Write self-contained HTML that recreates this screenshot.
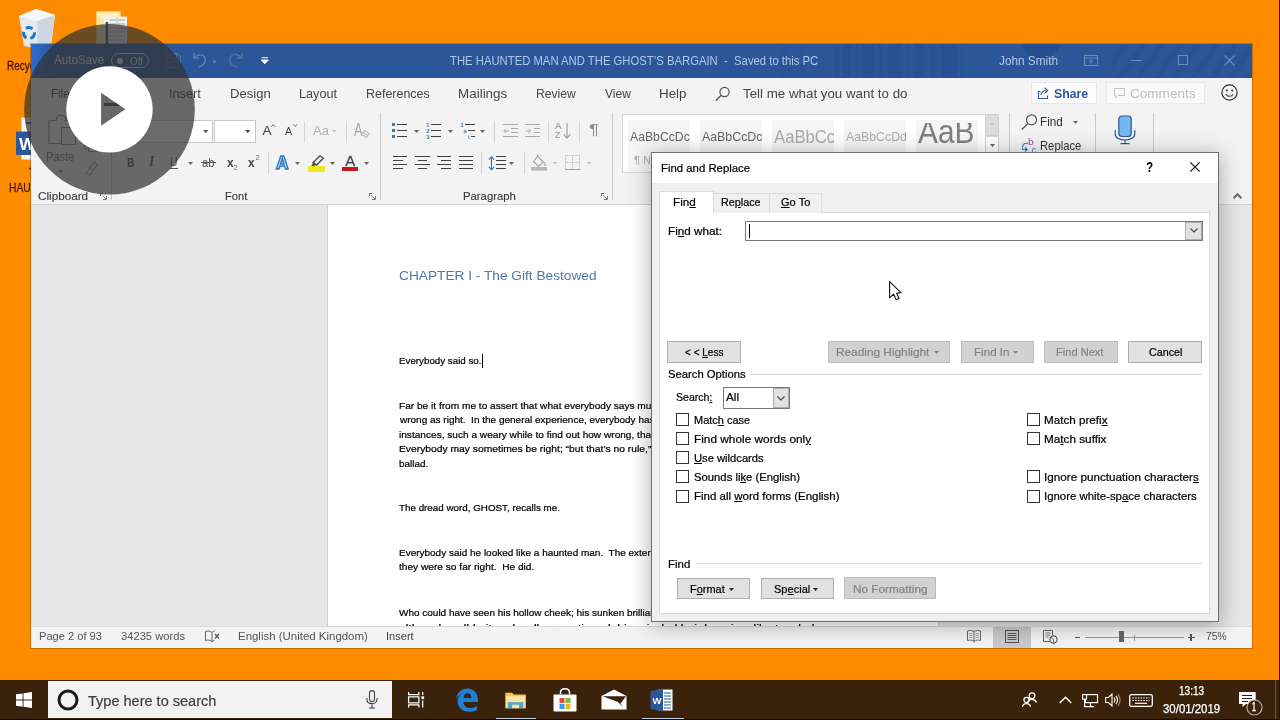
<!DOCTYPE html>
<html lang="en"><head><meta charset="utf-8"><title>Find and Replace - Word</title>
<style>
html,body{margin:0;padding:0}
body{width:1280px;height:720px;overflow:hidden;background:#ff8c00;font-family:"Liberation Sans",sans-serif}
#root{position:relative;width:1280px;height:720px;overflow:hidden;will-change:transform}
.a{position:absolute}
.t{position:absolute;white-space:pre;transform-origin:0 0;line-height:normal;font-family:"Liberation Sans",sans-serif}
.dlg{-webkit-text-stroke:.22px currentColor}
.t u{text-decoration:underline;text-underline-offset:1px}
svg{position:absolute;overflow:visible}
.btn{position:absolute;box-sizing:border-box;background:#e1e1e1;border:1px solid #adadad}
.btn.dis{background:#d2d2d2;border-color:#bcbcbc}
.cb{position:absolute;box-sizing:border-box;width:13px;height:13px;background:#fff;border:1px solid #333}
.sep{position:absolute;width:1px;background:#d0d0d0}
.clip{position:absolute;overflow:hidden}
</style></head><body><div id="root">
<svg style="left:16px;top:8px" width="42" height="42" viewBox="0 0 42 42">
<polygon points="3,8 20,1 39,7 35,38 22,41 8,38" fill="#e4e9ee"/>
<polygon points="3,8 20,1 39,7 21,13" fill="#f4f7fa"/>
<polygon points="21,13 39,7 35,38 22,41" fill="#cfd6dd"/>
<circle cx="13" cy="25" r="5.5" fill="none" stroke="#1979c9" stroke-width="3" stroke-dasharray="7 4"/>
</svg>
<span class="t " style="left:6.70px;top:59.00px;font-size:12.5px;color:#4a1200;transform:scaleX(0.7971);-webkit-text-stroke:.3px #4a1200;">Recycle Bin</span><svg style="left:96px;top:11px" width="32" height="34" viewBox="0 0 32 34">
<rect x="0.3" y="0.3" width="24.3" height="33" fill="#ffe49a"/>
<rect x="2" y="2" width="21" height="5" fill="#fff0c0"/>
<rect x="7.7" y="5.6" width="23.3" height="28" fill="#f3f1ea"/>
<rect x="9.6" y="11" width="2.6" height="22.5" fill="#4b4b4b"/>
<path d="M13.5 9H29M13.5 13H29M13.5 17H29M13.5 21H29M13.5 25H29M13.5 29H29" stroke="#b9bcc4" stroke-width="1.3"/>
<rect x="20" y="6" width="2" height="27" fill="#d9d9d9"/>
</svg>
<svg style="left:14px;top:117px" width="40" height="44" viewBox="0 0 40 44">
<rect x="7.5" y="0.5" width="26" height="42" fill="#fafafa"/>
<rect x="12" y="5" width="16" height="2" fill="#2b579a"/>
<rect x="2" y="14.5" width="23" height="23.5" fill="#2b579a"/>
</svg>
<span class="t " style="left:18.50px;top:134.50px;font-size:17px;color:#fff;font-weight:700;transform:scaleX(1.0294);">W</span><span class="t " style="left:28.50px;top:166.00px;font-size:12.5px;color:#4a1200;transform:scaleX(0.8718);-webkit-text-stroke:.3px #4a1200;">THE</span><span class="t " style="left:8.88px;top:181.40px;font-size:12.5px;color:#4a1200;transform:scaleX(0.8200);-webkit-text-stroke:.3px #4a1200;">HAUNTED</span><div class="a" style="left:31px;top:44px;width:1221px;height:604px;background:#f3f3f3;box-shadow:0 0 0 1px rgba(90,50,10,.35)"></div>
<div class="a" style="left:31px;top:44px;width:1221px;height:34px;background:#2b579a;overflow:hidden"><div class="a" style="left:804px;top:0;width:4px;height:34px;background:rgba(20,50,110,0.1)"></div><div class="a" style="left:812px;top:0;width:8px;height:34px;background:rgba(20,50,110,0.14)"></div><div class="a" style="left:825px;top:0;width:3px;height:34px;background:rgba(20,50,110,0.1)"></div><div class="a" style="left:831px;top:0;width:12px;height:34px;background:rgba(20,50,110,0.16)"></div><div class="a" style="left:847px;top:0;width:5px;height:34px;background:rgba(20,50,110,0.1)"></div><div class="a" style="left:857px;top:0;width:14px;height:34px;background:rgba(20,50,110,0.16)"></div><div class="a" style="left:875px;top:0;width:4px;height:34px;background:rgba(20,50,110,0.1)"></div><div class="a" style="left:883px;top:0;width:10px;height:34px;background:rgba(20,50,110,0.15)"></div><div class="a" style="left:899px;top:0;width:6px;height:34px;background:rgba(20,50,110,0.1)"></div><div class="a" style="left:910px;top:0;width:16px;height:34px;background:rgba(20,50,110,0.14)"></div><div class="a" style="left:929px;top:0;width:5px;height:34px;background:rgba(20,50,110,0.09)"></div><div class="a" style="left:749px;top:0;width:10px;height:34px;background:rgba(20,50,110,0.06)"></div><div class="a" style="left:769px;top:0;width:6px;height:34px;background:rgba(20,50,110,0.06)"></div><div class="a" style="left:1080px;top:0;width:141px;height:34px;background:repeating-linear-gradient(125deg,rgba(20,50,110,0) 0 9px,rgba(20,50,110,.13) 9px 15px)"></div><div class="a" style="left:0;top:0;width:22px;height:34px;background:linear-gradient(to right,#2a6cd2,#2b62b8 60%,#2b579a)"></div><div class="a" style="left:991px;top:-22px;width:38px;height:38px;border-radius:50%;background:rgba(20,50,110,.22)"></div></div>
<span class="t " style="left:53.75px;top:52.25px;font-size:13px;color:#dfe8f8;transform:scaleX(0.8906);">AutoSave</span><div class="a" style="left:111px;top:53px;width:38px;height:15px;border:1px solid #dfe8f8;border-radius:8px;box-sizing:border-box"></div>
<div class="a" style="left:116.5px;top:57.5px;width:6px;height:6px;border-radius:50%;background:#dfe8f8"></div>
<span class="t " style="left:130.00px;top:54.50px;font-size:10.5px;color:#dfe8f8;transform:scaleX(0.9356);">Off</span><svg style="left:166px;top:53px" width="15" height="15" viewBox="0 0 15 15"><path d="M0.5 0.5H11.5L14.5 3.5V14.5H0.5Z M3.5 0.5V5.5H10.5V0.5 M3 14.5V9H12V14.5" fill="none" stroke="#58749f" stroke-width="1"/></svg>
<svg style="left:193px;top:52px" width="26" height="16" viewBox="0 0 26 16"><path d="M1 1V6H6 M1.5 6C4 2.5 9 1.5 11.5 5S11 13 6 15" fill="none" stroke="#6480b2" stroke-width="1.3"/><path d="M19 8.5h5l-2.5 3z" fill="#6480b2"/></svg>
<svg style="left:228px;top:52px" width="16" height="16" viewBox="0 0 16 16"><path d="M14 1V6H9 M13 6C11 2 5 1 2.5 5S3 14 9 15" fill="none" stroke="#58749f" stroke-width="1.3"/></svg>
<svg style="left:261px;top:57px" width="8" height="8" viewBox="0 0 8 8"><path d="M0.5 0.7H7 M0.3 3H7.3L3.8 6.8Z" fill="#fff" stroke="#fff" stroke-width="1"/></svg>
<span class="t " style="left:450.00px;top:54.00px;font-size:12.5px;color:#b4c6e4;transform:scaleX(0.9036);">THE HAUNTED MAN AND THE GHOST’S BARGAIN  -  Saved to this PC</span><span class="t " style="left:999.00px;top:54.00px;font-size:12.5px;color:#b4c6e4;transform:scaleX(0.9428);">John Smith</span><svg style="left:1084px;top:55px" width="14" height="11" viewBox="0 0 14 11"><rect x="0.5" y="0.5" width="13" height="10" fill="none" stroke="#6f8cbb"/><path d="M0.5 3H13.5 M7 9V5 M5 6.8L7 4.8L9 6.8" fill="none" stroke="#6f8cbb"/></svg>
<div class="a" style="left:1131px;top:60px;width:11px;height:1px;background:#6f8cbb"></div>
<div class="a" style="left:1178px;top:55px;width:10px;height:10px;border:1px solid #6f8cbb;box-sizing:border-box"></div>
<svg style="left:1224px;top:55px" width="11" height="11" viewBox="0 0 11 11"><path d="M0.5 0.5L10.5 10.5M10.5 0.5L0.5 10.5" stroke="#6f8cbb" stroke-width="1.1"/></svg>
<span class="t " style="left:51.11px;top:86.00px;font-size:13px;color:#444;transform:scaleX(0.8875);">File</span><span class="t " style="left:104.50px;top:86.00px;font-size:13px;color:#2b579a;transform:scaleX(1.0016);">Home</span><div class="a" style="left:103.5px;top:103px;width:34px;height:2.6px;background:#2b579a"></div>
<span class="t " style="left:169.32px;top:86.00px;font-size:13px;color:#444;transform:scaleX(0.9796);">Insert</span><span class="t " style="left:229.79px;top:86.00px;font-size:13px;color:#444;transform:scaleX(1.0067);">Design</span><span class="t " style="left:299.07px;top:86.00px;font-size:13px;color:#444;transform:scaleX(0.9761);">Layout</span><span class="t " style="left:366.09px;top:86.00px;font-size:13px;color:#444;transform:scaleX(0.9586);">References</span><span class="t " style="left:457.77px;top:86.00px;font-size:13px;color:#444;transform:scaleX(1.0332);">Mailings</span><span class="t " style="left:536.11px;top:86.00px;font-size:13px;color:#444;transform:scaleX(0.9352);">Review</span><span class="t " style="left:605.05px;top:86.00px;font-size:13px;color:#444;transform:scaleX(0.9281);">View</span><span class="t " style="left:659.02px;top:86.00px;font-size:13px;color:#444;transform:scaleX(1.0292);">Help</span><svg style="left:715px;top:86px" width="16" height="16" viewBox="0 0 16 16"><circle cx="9.5" cy="6" r="4.6" fill="none" stroke="#555" stroke-width="1.2"/><path d="M6.2 9.3L0.8 14.7" stroke="#555" stroke-width="1.4"/></svg>
<span class="t " style="left:742.50px;top:86.00px;font-size:13px;color:#444;transform:scaleX(1.0254);">Tell me what you want to do</span><div class="a" style="left:1031px;top:82px;width:66px;height:22px;background:#fdfdfd;border:1px solid #e6e6e6;box-sizing:border-box"></div>
<svg style="left:1038px;top:87px" width="12" height="12" viewBox="0 0 12 12"><path d="M2.5 4.5H0.5V11.5H9.5V8.5 M3 8C3.5 5 6 3.5 8.5 3.5 M6.5 0.8L9.8 3.5L6.5 6.3" fill="none" stroke="#2b579a" stroke-width="1.1"/></svg>
<span class="t " style="left:1054.00px;top:86.00px;font-size:13px;color:#2b579a;font-weight:700;transform:scaleX(0.9471);">Share</span><div class="a" style="left:1106px;top:82px;width:99px;height:22px;background:#fafafa;border:1px solid #e9e9e9;box-sizing:border-box"></div>
<svg style="left:1114px;top:88px" width="12" height="11" viewBox="0 0 12 11"><path d="M0.5 0.5H10.5V7.5H4L1.5 10V7.5H0.5Z" fill="none" stroke="#c4c4c4" stroke-width="1"/></svg>
<span class="t " style="left:1130.00px;top:86.00px;font-size:13px;color:#bdbdbd;transform:scaleX(1.0419);">Comments</span><svg style="left:1221px;top:84px" width="17" height="17" viewBox="0 0 17 17"><circle cx="8.5" cy="8.5" r="7.6" fill="none" stroke="#333" stroke-width="1.2"/><circle cx="5.8" cy="6.5" r="1" fill="#333"/><circle cx="11.2" cy="6.5" r="1" fill="#333"/><path d="M4.8 10.2C6.5 13 10.5 13 12.2 10.2" fill="none" stroke="#333" stroke-width="1.1"/></svg>
<div class="a" style="left:31px;top:204px;width:1221px;height:1px;background:#d2d2d2"></div>
<div class="a" style="left:110.5px;top:113px;width:1px;height:87px;background:#c9c9c9"></div>
<div class="a" style="left:380px;top:113px;width:1px;height:87px;background:#c9c9c9"></div>
<div class="a" style="left:612px;top:113px;width:1px;height:87px;background:#c9c9c9"></div>
<div class="a" style="left:1009px;top:113px;width:1px;height:87px;background:#c9c9c9"></div>
<div class="a" style="left:1095px;top:113px;width:1px;height:87px;background:#c9c9c9"></div>
<div class="a" style="left:1153px;top:113px;width:1px;height:87px;background:#c9c9c9"></div>
<svg style="left:48px;top:115px" width="30" height="31" viewBox="0 0 30 31"><path d="M1 5.5H8.5V2.5C11 -0.5 15 -0.5 17.5 2.5V5.5H25V9 M1 5.5V28.5H13" fill="none" stroke="#8a8a8a" stroke-width="1.1"/><rect x="13.5" y="12.5" width="14" height="17" fill="#f3f3f3" stroke="#8a8a8a" stroke-width="1.1"/></svg>
<span class="t " style="left:45.61px;top:149.70px;font-size:12.5px;color:#777;transform:scaleX(0.8867);">Paste</span><svg style="left:57.5px;top:170px" width="5" height="3.0" viewBox="0 0 5 3.0"><path d="M0 0H5 L2.5 3.0 Z" fill="#888"/></svg>
<svg style="left:84px;top:120px" width="12" height="12" viewBox="0 0 12 12"><path d="M3 0L8 9M9 0L4 9" stroke="#9a9a9a" fill="none"/><circle cx="3" cy="10" r="1.8" fill="none" stroke="#9a9a9a"/><circle cx="9" cy="10" r="1.8" fill="none" stroke="#9a9a9a"/></svg>
<svg style="left:84px;top:139px" width="13" height="13" viewBox="0 0 13 13"><rect x="0.5" y="0.5" width="8" height="9" fill="none" stroke="#9a9a9a"/><rect x="4.5" y="3.5" width="8" height="9" fill="#f3f3f3" stroke="#9a9a9a"/></svg>
<svg style="left:85px;top:161px" width="14" height="15" viewBox="0 0 14 15"><path d="M9 1L12.5 3.5L8 9.5L4.5 7Z M4.5 7L1 12.5L5 14L8 9.5" fill="none" stroke="#a5a5a5" stroke-width="1.1"/></svg>
<span class="t " style="left:37.50px;top:189.70px;font-size:11.5px;color:#3a3a3a;transform:scaleX(1.0179);-webkit-text-stroke:.15px #3a3a3a;">Clipboard</span><svg style="left:100px;top:193px" width="7" height="7" viewBox="0 0 7 7"><path d="M0.5 3V0.5H3 M2.5 2.5L6 6 M6.5 3V6.5H3" fill="none" stroke="#777" stroke-width="1"/></svg>
<div class="a" style="left:117px;top:120px;width:95.5px;height:23px;background:#fff;border:1px solid #c6c6c6;box-sizing:border-box"></div>
<div class="a" style="left:213.5px;top:120px;width:42.5px;height:23px;background:#fff;border:1px solid #c6c6c6;box-sizing:border-box"></div>
<svg style="left:202.55px;top:129.5px" width="5.5" height="3.3" viewBox="0 0 5.5 3.3"><path d="M0 0H5.5 L2.75 3.3 Z" fill="#555"/></svg>
<svg style="left:245.25px;top:129.5px" width="5.5" height="3.3" viewBox="0 0 5.5 3.3"><path d="M0 0H5.5 L2.75 3.3 Z" fill="#555"/></svg>
<span class="t " style="left:262.50px;top:122.70px;font-size:13.5px;color:#444;transform:scaleX(1.0000);">A</span><svg style="left:271px;top:123.5px" width="4.5" height="3.2" viewBox="0 0 5 3.5"><path d="M0.3 3.2L2.5 0.6L4.7 3.2" fill="none" stroke="#3f78ad" stroke-width="1.1"/></svg>
<span class="t " style="left:285.00px;top:124.70px;font-size:11.5px;color:#444;transform:scaleX(0.9375);">A</span><svg style="left:292.5px;top:123.5px" width="4.5" height="3.2" viewBox="0 0 5 3.5"><path d="M0.3 0.3L2.5 2.9L4.7 0.3" fill="none" stroke="#3f78ad" stroke-width="1.1"/></svg>
<div class="a" style="left:304px;top:121px;width:1px;height:22px;background:#d4d4d4"></div>
<span class="t " style="left:312.50px;top:123.40px;font-size:13.5px;color:#b0b0b0;transform:scaleX(0.9703);">Aa</span><svg style="left:331.75px;top:129.5px" width="4.5" height="2.6999999999999997" viewBox="0 0 4.5 2.6999999999999997"><path d="M0 0H4.5 L2.25 2.6999999999999997 Z" fill="#c4c4c4"/></svg>
<div class="a" style="left:346px;top:121px;width:1px;height:22px;background:#d4d4d4"></div>
<span class="t " style="left:354.00px;top:119.90px;font-size:17.5px;color:#a6a6a6;transform:scaleX(0.7333);">A</span><svg style="left:360.5px;top:129.8px" width="9" height="8" viewBox="0 0 9 8"><path d="M3.5 0.5L8.5 3.5L5.5 7.5L0.5 4.5Z M2 2.5L7 5.5" fill="#f3f3f3" stroke="#b0b0b0" stroke-width="1"/></svg>
<span class="t " style="left:126.60px;top:154.50px;font-size:13px;color:#555;font-weight:700;transform:scaleX(0.7889);">B</span><span class="t " style="left:149.47px;top:153.60px;font-size:14px;color:#555;font-weight:700;font-style:italic;transform:scaleX(0.9714);font-family:'Liberation Serif',serif;">I</span><span class="t " style="left:169.70px;top:155.00px;font-size:12.5px;color:#555;transform:scaleX(0.8333);">U</span><div class="a" style="left:169.5px;top:168px;width:8px;height:1px;background:#555"></div>
<svg style="left:187.8px;top:161.5px" width="5" height="3.0" viewBox="0 0 5 3.0"><path d="M0 0H5 L2.5 3.0 Z" fill="#666"/></svg>
<span class="t " style="left:202.00px;top:155.50px;font-size:12.5px;color:#555;transform:scaleX(0.8959);">ab</span><div class="a" style="left:200.6px;top:162px;width:15.4px;height:1px;background:#555"></div>
<span class="t " style="left:226.50px;top:154.50px;font-size:13.5px;color:#444;font-weight:700;transform:scaleX(0.8750);">x</span><span class="t " style="left:233.50px;top:163.00px;font-size:7.5px;color:#3f78ad;transform:scaleX(1.0000);">2</span><span class="t " style="left:248.40px;top:154.50px;font-size:13.5px;color:#444;font-weight:700;transform:scaleX(0.8750);">x</span><span class="t " style="left:255.40px;top:152.50px;font-size:7.5px;color:#3f78ad;transform:scaleX(1.0000);">2</span><div class="a" style="left:267.5px;top:152px;width:1px;height:22px;background:#d4d4d4"></div>
<span class="t " style="left:276.00px;top:152.60px;font-size:18px;color:#d9ecff;font-weight:700;transform:scaleX(0.9615);-webkit-text-stroke:1.5px #2b78c8;text-shadow:0 0 2px #9fd0ff;">A</span><svg style="left:295.0px;top:161.5px" width="5" height="3.0" viewBox="0 0 5 3.0"><path d="M0 0H5 L2.5 3.0 Z" fill="#666"/></svg>
<svg style="left:309.5px;top:154.5px" width="15" height="12" viewBox="0 0 15 12"><path d="M10 0.8L13.3 3.3L6.6 10L3.2 7.4Z" fill="none" stroke="#4a4a4a" stroke-width="1.4"/><path d="M3.2 7.4L6.6 10L1 11.4Z" fill="#4a4a4a"/></svg>
<div class="a" style="left:307.5px;top:166.3px;width:17.5px;height:5.5px;background:#ecea1e;border-radius:1px"></div>
<svg style="left:330.0px;top:161.5px" width="5" height="3.0" viewBox="0 0 5 3.0"><path d="M0 0H5 L2.5 3.0 Z" fill="#666"/></svg>
<span class="t " style="left:345.20px;top:151.80px;font-size:15px;color:#444;transform:scaleX(1.0000);-webkit-text-stroke:.3px #444;">A</span><div class="a" style="left:342px;top:166.5px;width:16px;height:4.5px;background:#c8171e"></div>
<svg style="left:363.75px;top:161.5px" width="5" height="3.0" viewBox="0 0 5 3.0"><path d="M0 0H5 L2.5 3.0 Z" fill="#666"/></svg>
<span class="t " style="left:225.40px;top:189.70px;font-size:11.5px;color:#3a3a3a;transform:scaleX(0.9657);-webkit-text-stroke:.15px #3a3a3a;">Font</span><svg style="left:369px;top:193px" width="7" height="7" viewBox="0 0 7 7"><path d="M0.5 3V0.5H3 M2.5 2.5L6 6 M6.5 3V6.5H3" fill="none" stroke="#777" stroke-width="1"/></svg>
<div class="a" style="left:392px;top:123px;width:3px;height:3px;background:#3f78ad"></div>
<div class="a" style="left:397px;top:124px;width:10px;height:1px;background:#404040"></div>
<div class="a" style="left:431px;top:124px;width:10px;height:1px;background:#404040"></div>
<div class="a" style="left:392px;top:129px;width:3px;height:3px;background:#3f78ad"></div>
<div class="a" style="left:397px;top:130px;width:10px;height:1px;background:#404040"></div>
<div class="a" style="left:431px;top:130px;width:10px;height:1px;background:#404040"></div>
<div class="a" style="left:392px;top:135px;width:3px;height:3px;background:#3f78ad"></div>
<div class="a" style="left:397px;top:136px;width:10px;height:1px;background:#404040"></div>
<div class="a" style="left:431px;top:136px;width:10px;height:1px;background:#404040"></div>
<div class="a" style="left:465px;top:124px;width:10px;height:1px;background:#404040"></div>
<div class="a" style="left:468px;top:130px;width:7px;height:1px;background:#404040"></div>
<div class="a" style="left:471px;top:136px;width:4px;height:1px;background:#404040"></div>
<svg style="left:425.5px;top:120px" width="6" height="20" viewBox="0 0 6 20"><text x="0.3" y="6.6" font-size="5.8" font-weight="700" font-family="Liberation Sans, sans-serif" fill="#3f78ad">1</text><text x="0.3" y="12.6" font-size="5.8" font-weight="700" font-family="Liberation Sans, sans-serif" fill="#3f78ad">2</text><text x="0.3" y="18.6" font-size="5.8" font-weight="700" font-family="Liberation Sans, sans-serif" fill="#3f78ad">3</text></svg>
<svg style="left:459.5px;top:120px" width="12" height="20" viewBox="0 0 12 20"><text x="0.5" y="6.6" font-size="5.8" font-weight="700" font-family="Liberation Sans, sans-serif" fill="#3f78ad">1</text><text x="3.5" y="12.6" font-size="5.8" font-weight="700" font-family="Liberation Sans, sans-serif" fill="#3f78ad">a</text><text x="8" y="18.6" font-size="5.8" font-weight="700" font-family="Liberation Sans, sans-serif" fill="#3f78ad">i</text></svg>
<svg style="left:413.9px;top:130px" width="5" height="3.0" viewBox="0 0 5 3.0"><path d="M0 0H5 L2.5 3.0 Z" fill="#666"/></svg>
<svg style="left:447.9px;top:130px" width="5" height="3.0" viewBox="0 0 5 3.0"><path d="M0 0H5 L2.5 3.0 Z" fill="#666"/></svg>
<svg style="left:480.0px;top:130px" width="5" height="3.0" viewBox="0 0 5 3.0"><path d="M0 0H5 L2.5 3.0 Z" fill="#666"/></svg>
<div class="a" style="left:494px;top:121px;width:1px;height:22px;background:#d4d4d4"></div>
<div class="a" style="left:503px;top:124px;width:14.5px;height:1px;background:#a9a9a9"></div>
<div class="a" style="left:511px;top:128px;width:6.5px;height:1px;background:#a9a9a9"></div>
<div class="a" style="left:511px;top:132px;width:6.5px;height:1px;background:#a9a9a9"></div>
<div class="a" style="left:503px;top:136px;width:14.5px;height:1px;background:#a9a9a9"></div>
<div class="a" style="left:525px;top:124px;width:14.5px;height:1px;background:#a9a9a9"></div>
<div class="a" style="left:533.5px;top:128px;width:6.0px;height:1px;background:#a9a9a9"></div>
<div class="a" style="left:533.5px;top:132px;width:6.0px;height:1px;background:#a9a9a9"></div>
<div class="a" style="left:525px;top:136px;width:14.5px;height:1px;background:#a9a9a9"></div>
<svg style="left:503px;top:127.5px" width="7" height="6" viewBox="0 0 7 6"><path d="M6 3H0.8 M3 0.8L0.8 3L3 5.2" fill="none" stroke="#a9a9a9" stroke-width="1"/></svg>
<svg style="left:525px;top:127.5px" width="7" height="6" viewBox="0 0 7 6"><path d="M0.3 3H5.5 M3.3 0.8L5.5 3L3.3 5.2" fill="none" stroke="#a9a9a9" stroke-width="1"/></svg>
<div class="a" style="left:547.5px;top:121px;width:1px;height:22px;background:#d4d4d4"></div>
<span class="t " style="left:555.00px;top:121.00px;font-size:9px;color:#9a9a9a;transform:scaleX(1.0833);-webkit-text-stroke:.2px #9a9a9a;">A</span><span class="t " style="left:555.30px;top:130.40px;font-size:8.8px;color:#9a9a9a;transform:scaleX(0.9500);-webkit-text-stroke:.2px #9a9a9a;">Z</span><svg style="left:563.4px;top:123px" width="8" height="16" viewBox="0 0 8 16"><path d="M4 0.3V15 M0.7 11.4L4 15.2L7.3 11.4" fill="none" stroke="#9a9a9a" stroke-width="1.1"/></svg>
<div class="a" style="left:578.75px;top:121px;width:1px;height:22px;background:#d4d4d4"></div>
<span class="t " style="left:588.60px;top:120.30px;font-size:15px;color:#8c8c8c;transform:scaleX(1.2375);">¶</span><div class="a" style="left:393px;top:156px;width:14px;height:1px;background:#404040"></div>
<div class="a" style="left:415px;top:156px;width:14.5px;height:1px;background:#404040"></div>
<div class="a" style="left:437px;top:156px;width:14px;height:1px;background:#404040"></div>
<div class="a" style="left:459px;top:156px;width:14px;height:1px;background:#404040"></div>
<div class="a" style="left:496px;top:156px;width:9.5px;height:1px;background:#404040"></div>
<div class="a" style="left:393px;top:160px;width:9.5px;height:1px;background:#404040"></div>
<div class="a" style="left:417.5px;top:160px;width:9.5px;height:1px;background:#404040"></div>
<div class="a" style="left:441px;top:160px;width:10px;height:1px;background:#404040"></div>
<div class="a" style="left:459px;top:160px;width:14px;height:1px;background:#404040"></div>
<div class="a" style="left:496px;top:160px;width:9.5px;height:1px;background:#404040"></div>
<div class="a" style="left:393px;top:164px;width:14px;height:1px;background:#404040"></div>
<div class="a" style="left:415px;top:164px;width:14.5px;height:1px;background:#404040"></div>
<div class="a" style="left:437px;top:164px;width:14px;height:1px;background:#404040"></div>
<div class="a" style="left:459px;top:164px;width:14px;height:1px;background:#404040"></div>
<div class="a" style="left:496px;top:164px;width:9.5px;height:1px;background:#404040"></div>
<div class="a" style="left:393px;top:168px;width:9.5px;height:1px;background:#404040"></div>
<div class="a" style="left:417.5px;top:168px;width:9.5px;height:1px;background:#404040"></div>
<div class="a" style="left:441px;top:168px;width:10px;height:1px;background:#404040"></div>
<div class="a" style="left:459px;top:168px;width:14px;height:1px;background:#404040"></div>
<div class="a" style="left:496px;top:168px;width:9.5px;height:1px;background:#404040"></div>
<div class="a" style="left:481.25px;top:152px;width:1px;height:22px;background:#d4d4d4"></div>
<svg style="left:488px;top:155.5px" width="8" height="15" viewBox="0 0 8 15"><path d="M3.5 1V13.5 M0.8 3.6L3.5 0.8L6.2 3.6 M0.8 10.9L3.5 13.7L6.2 10.9" fill="none" stroke="#3f78ad" stroke-width="1.2"/></svg>
<svg style="left:508.75px;top:161.5px" width="5" height="3.0" viewBox="0 0 5 3.0"><path d="M0 0H5 L2.5 3.0 Z" fill="#666"/></svg>
<div class="a" style="left:523.75px;top:152px;width:1px;height:22px;background:#d4d4d4"></div>
<svg style="left:531px;top:154px" width="17" height="17" viewBox="0 0 17 17"><path d="M6.5 2.5L12.5 8L7.5 12.5L2.5 7.5Z M6.5 2.5V0.5 M12.5 8C14.5 9 14.5 11 13.5 12" fill="none" stroke="#a0a0a0" stroke-width="1.1"/><rect x="0" y="13" width="16" height="3.6" fill="#b9b9b9"/></svg>
<svg style="left:552.75px;top:161.5px" width="4.5" height="2.6999999999999997" viewBox="0 0 4.5 2.6999999999999997"><path d="M0 0H4.5 L2.25 2.6999999999999997 Z" fill="#c0c0c0"/></svg>
<svg style="left:565px;top:155px" width="15" height="15" viewBox="0 0 15 15"><rect x="0.5" y="0.5" width="14" height="14" fill="none" stroke="#d0d0d0"/><path d="M7.5 0.5V14.5M0.5 7.5H14.5" stroke="#d0d0d0"/><path d="M0 14.5H15" stroke="#9a9a9a"/></svg>
<svg style="left:587.25px;top:161.5px" width="4.5" height="2.6999999999999997" viewBox="0 0 4.5 2.6999999999999997"><path d="M0 0H4.5 L2.25 2.6999999999999997 Z" fill="#c0c0c0"/></svg>
<span class="t " style="left:462.50px;top:189.70px;font-size:11.5px;color:#3a3a3a;transform:scaleX(0.9848);-webkit-text-stroke:.15px #3a3a3a;">Paragraph</span><svg style="left:600.5px;top:193px" width="7" height="7" viewBox="0 0 7 7"><path d="M0.5 3V0.5H3 M2.5 2.5L6 6 M6.5 3V6.5H3" fill="none" stroke="#777" stroke-width="1"/></svg>
<div class="a" style="left:622px;top:114px;width:363.5px;height:59px;background:#fff;border:1px solid #d6d6d6;box-sizing:border-box"></div>
<div class="a" style="left:628px;top:120px;width:62px;height:52px;background:#f6f4f5"></div>
<div class="a" style="left:700px;top:120px;width:62px;height:52px;background:#f6f4f5"></div>
<div class="a" style="left:772px;top:120px;width:62px;height:52px;background:#f6f4f5"></div>
<div class="a" style="left:844px;top:120px;width:62px;height:52px;background:#f6f4f5"></div>
<div class="a" style="left:916px;top:120px;width:62px;height:52px;background:#f6f4f5"></div>
<div class="clip" style="left:628px;top:120px;width:62px;height:52px"><span class="t " style="left:2.00px;top:8.80px;font-size:12.8px;color:#666;transform:scaleX(0.9545);">AaBbCcDc</span></div><div class="clip" style="left:700px;top:120px;width:62px;height:52px"><span class="t " style="left:1.50px;top:8.80px;font-size:12.8px;color:#666;transform:scaleX(0.9652);">AaBbCcDc</span></div><div class="clip" style="left:772px;top:120px;width:62px;height:52px"><span class="t " style="left:1.75px;top:6.50px;font-size:17.5px;color:#ababab;transform:scaleX(0.9533);">AaBbCcD</span></div><div class="clip" style="left:844px;top:120px;width:62px;height:52px"><span class="t " style="left:1.75px;top:9.00px;font-size:13.5px;color:#ababab;transform:scaleX(0.9114);">AaBbCcDd</span></div><div class="clip" style="left:916px;top:122.5px;width:62px;height:49.5px"><span class="t " style="left:1.80px;top:-10.00px;font-size:33.5px;color:#808080;transform:scaleX(0.8907);">AaB</span></div><span class="t " style="left:634.30px;top:154.40px;font-size:11px;color:#ababab;transform:scaleX(0.9939);">¶ Normal</span><div class="a" style="left:985px;top:114px;width:14px;height:22px;background:#dcdcdc;border:1px solid #d0d0d0;box-sizing:border-box"></div>
<div class="a" style="left:985px;top:135.5px;width:14px;height:20px;background:#fdfdfd;border:1px solid #d0d0d0;box-sizing:border-box"></div>
<svg style="left:990px;top:122px" width="4" height="3" viewBox="0 0 4 3"><path d="M0 3H4L2 0Z" fill="#c4c4c4"/></svg>
<svg style="left:989.5px;top:143.5px" width="5" height="3.0" viewBox="0 0 5 3.0"><path d="M0 0H5 L2.5 3.0 Z" fill="#666"/></svg>
<svg style="left:1021px;top:114px" width="17" height="16" viewBox="0 0 17 16"><circle cx="10.5" cy="5.8" r="5" fill="none" stroke="#555" stroke-width="1.2"/><path d="M6.8 9.6L0.8 15.4" stroke="#555" stroke-width="1.4"/></svg>
<span class="t " style="left:1039.70px;top:114.40px;font-size:13px;color:#333;transform:scaleX(0.9019);">Find</span><svg style="left:1072.8px;top:120.5px" width="5" height="3.0" viewBox="0 0 5 3.0"><path d="M0 0H5 L2.5 3.0 Z" fill="#666"/></svg>
<span class="t " style="left:1027.50px;top:135.50px;font-size:9.5px;color:#a349a4;transform:scaleX(1.1000);">b</span><span class="t " style="left:1031.50px;top:143.50px;font-size:9.5px;color:#2b7cd3;transform:scaleX(1.0000);">c</span><svg style="left:1021px;top:142px" width="10" height="10" viewBox="0 0 10 10"><path d="M7 1.5C3 0.5 0.5 3.5 1.5 7 M1.2 7.5H6 M4 5.5L6.2 7.5L4 9.5" fill="none" stroke="#2b7cd3" stroke-width="1.1"/></svg>
<span class="t " style="left:1039.73px;top:137.50px;font-size:13px;color:#333;transform:scaleX(0.8651);">Replace</span><svg style="left:1114px;top:115px" width="22" height="30" viewBox="0 0 22 30"><rect x="4.8" y="1" width="12.4" height="20.5" rx="3" fill="#72b7f0" stroke="#2b579a" stroke-width="1.2"/><path d="M1.2 15V19C1.2 27 20.8 27 20.8 19V15 M11 25.3V28.3 M6.5 28.6H15.5" fill="none" stroke="#2b579a" stroke-width="1.2"/></svg>
<svg style="left:1233px;top:193px" width="9" height="6" viewBox="0 0 9 6"><path d="M0.6 5.2L4.5 1.2L8.4 5.2" fill="none" stroke="#6a6a6a" stroke-width="2"/></svg>
<div class="a" style="left:31px;top:205px;width:1221px;height:421px;background:#e6e6e6"></div>
<div class="a" style="left:327px;top:205px;width:611.5px;height:421px;background:#fff;border-left:1px solid #d0d0d0;border-right:1px solid #d0d0d0;box-sizing:border-box"></div>
<span class="t " style="left:399.25px;top:267.90px;font-size:13.4px;color:#4e79a3;transform:scaleX(1.0224);">CHAPTER I - The Gift Bestowed</span><span class="t " style="left:399.25px;top:354.75px;font-size:9.8px;color:#000;transform:scaleX(0.9964);-webkit-text-stroke:.22px #000;">Everybody said so.</span><div class="a" style="left:482px;top:354px;width:1px;height:13.5px;background:#000"></div>
<span class="t " style="left:399.25px;top:399.60px;font-size:9.8px;color:#000;transform:scaleX(1.0325);-webkit-text-stroke:.22px #000;">Far be it from me to assert that what everybody says must be true.  Everybody is, often, as likely to be</span><span class="t " style="left:400.27px;top:414.20px;font-size:9.8px;color:#000;transform:scaleX(1.0204);-webkit-text-stroke:.22px #000;">wrong as right.  In the general experience, everybody has been wrong so often, and it has taken, in most</span><span class="t " style="left:399.25px;top:428.70px;font-size:9.8px;color:#000;transform:scaleX(1.0312);-webkit-text-stroke:.22px #000;">instances, such a weary while to find out how wrong, that the authority is proved to be fallible.</span><span class="t " style="left:399.25px;top:443.30px;font-size:9.8px;color:#000;transform:scaleX(1.0516);-webkit-text-stroke:.22px #000;">Everybody may sometimes be right; “but that’s no rule,” as the ghost of Giles Scroggins says in the</span><span class="t " style="left:399.25px;top:457.60px;font-size:9.8px;color:#000;transform:scaleX(1.0108);-webkit-text-stroke:.22px #000;">ballad.</span><span class="t " style="left:399.25px;top:502.40px;font-size:9.8px;color:#000;transform:scaleX(1.0016);-webkit-text-stroke:.22px #000;">The dread word, GHOST, recalls me.</span><span class="t " style="left:399.25px;top:546.70px;font-size:9.8px;color:#000;transform:scaleX(1.0188);-webkit-text-stroke:.22px #000;">Everybody said he looked like a haunted man.  The extent of my present claim for everybody is, that</span><span class="t " style="left:399.25px;top:561.30px;font-size:9.8px;color:#000;transform:scaleX(1.0353);-webkit-text-stroke:.22px #000;">they were so far right.  He did.</span><span class="t " style="left:399.25px;top:606.80px;font-size:9.8px;color:#000;transform:scaleX(1.0186);-webkit-text-stroke:.22px #000;">Who could have seen his hollow cheek; his sunken brilliant eye; his black-attired figure, indefinably grim,</span><span class="t " style="left:399.25px;top:622.40px;font-size:9.8px;color:#000;transform:scaleX(1.2262);-webkit-text-stroke:.22px #000;">although well-knit and well-proportioned; his grizzled hair hanging, like tangled sea-</span><div class="a" style="left:31px;top:626px;width:1221px;height:22px;background:#f3f3f3;border-top:1px solid #dadada;box-sizing:border-box"></div>
<span class="t " style="left:39.25px;top:630.00px;font-size:11.5px;color:#555;transform:scaleX(0.9641);">Page 2 of 93</span><span class="t " style="left:121.25px;top:630.00px;font-size:11.5px;color:#555;transform:scaleX(0.9720);">34235 words</span><svg style="left:205px;top:630px" width="15" height="13" viewBox="0 0 15 13"><path d="M7 2.5C5 0.8 2.5 0.8 0.5 1.5V10.5C2.5 9.8 5 9.8 7 11.5V2.5C8 1.5 9 1 10 1 M7 11.5C8 10.8 8.5 10.5 9.5 10.3" fill="none" stroke="#666" stroke-width="1"/><path d="M10 4L14 8.5M14 4L10 8.5" stroke="#555" stroke-width="1.2"/></svg>
<span class="t " style="left:237.50px;top:630.00px;font-size:11.5px;color:#555;transform:scaleX(0.9957);">English (United Kingdom)</span><span class="t " style="left:385.79px;top:630.30px;font-size:11.5px;color:#444;transform:scaleX(0.9627);">Insert</span><svg style="left:967px;top:630px" width="14" height="13" viewBox="0 0 14 13"><path d="M7 1.5C5 0.3 2.5 0.3 0.5 1V10.5C2.5 9.8 5 9.8 7 11C9 9.8 11.5 9.8 13.5 10.5V1C11.5 0.3 9 0.3 7 1.5V12.5" fill="none" stroke="#666" stroke-width="1"/><path d="M2 3.5H5.5M2 5.5H5.5M2 7.5H5.5M8.5 3.5H12M8.5 5.5H12M8.5 7.5H12" stroke="#888" stroke-width="0.8"/></svg>
<div class="a" style="left:993px;top:626.5px;width:37.5px;height:21.5px;background:#c9c9c9"></div>
<svg style="left:1005px;top:630px" width="14" height="13" viewBox="0 0 14 13"><rect x="0.5" y="0.5" width="13" height="12" fill="none" stroke="#555"/><path d="M2.5 3.5H11.5M2.5 5.5H11.5M2.5 7.5H11.5M2.5 9.5H11.5" stroke="#555" stroke-width="1"/></svg>
<svg style="left:1043px;top:630px" width="15" height="14" viewBox="0 0 15 14"><path d="M9.5 0.5H0.5V11.5H7 M9.5 0.5V5" fill="none" stroke="#666"/><path d="M2.5 3H7.5M2.5 5H7.5M2.5 7H6" stroke="#777" stroke-width="0.9"/><circle cx="10.5" cy="9.5" r="3.6" fill="#f3f3f3" stroke="#555" stroke-width="1.1"/><path d="M8 7.5C10 8 11 10 10.5 12.5" fill="none" stroke="#555" stroke-width="0.9"/></svg>
<div class="a" style="left:1074.5px;top:636.5px;width:5.5px;height:1.6px;background:#555"></div>
<div class="a" style="left:1084.5px;top:637px;width:99px;height:1px;background:#9a9a9a"></div>
<div class="a" style="left:1134px;top:634.5px;width:1px;height:6px;background:#9a9a9a"></div>
<div class="a" style="left:1118.8px;top:631.2px;width:5.4px;height:11px;background:#666"></div>
<div class="a" style="left:1187.5px;top:636.5px;width:7px;height:1.6px;background:#555"></div>
<div class="a" style="left:1190.2px;top:633.8px;width:1.6px;height:7px;background:#555"></div>
<span class="t " style="left:1206.25px;top:630.00px;font-size:11.5px;color:#555;transform:scaleX(0.8995);">75%</span><div class="a" style="left:651px;top:152px;width:568px;height:470px;background:#f0f0f0;border:1px solid #6e6e6e;box-sizing:border-box;box-shadow:0 3px 20px 1px rgba(0,0,0,.30)"></div>
<div class="a" style="left:652px;top:153px;width:566px;height:30px;background:#fff"></div>
<span class="t dlg" style="left:660.50px;top:161.00px;font-size:11.8px;color:#000;transform:scaleX(0.9633);">Find and Replace</span><span class="t " style="left:1146.30px;top:159.30px;font-size:14px;color:#000;font-weight:700;transform:scaleX(0.8375);">?</span><svg style="left:1190px;top:161.5px" width="10" height="10.5" viewBox="0 0 10 10.5"><path d="M0.3 0.3L9.7 9.7M9.7 0.3L0.3 9.7" stroke="#111" stroke-width="1.2"/></svg>
<div class="a" style="left:659px;top:212px;width:550.5px;height:401.5px;background:#fff;border:1px solid #dcdcdc;box-sizing:border-box"></div>
<div class="a" style="left:769px;top:192.5px;width:53px;height:20px;background:#f0f0f0;border:1px solid #dcdcdc;border-left:none;border-bottom:none;box-sizing:border-box"></div>
<div class="a" style="left:713px;top:192.5px;width:56.5px;height:20px;background:#f0f0f0;border:1px solid #dcdcdc;border-bottom:none;box-sizing:border-box"></div>
<div class="a" style="left:659px;top:190.5px;width:54.5px;height:22.5px;background:#fff;border:1px solid #dcdcdc;border-bottom:none;box-sizing:border-box"></div>
<span class="t dlg" style="left:673.25px;top:196.25px;font-size:11.3px;color:#000;transform:scaleX(1.0372);">Fin<u>d</u></span><span class="t dlg" style="left:721.25px;top:196.25px;font-size:11.3px;color:#000;transform:scaleX(0.9535);">Re<u>p</u>lace</span><span class="t dlg" style="left:781.25px;top:196.25px;font-size:11.3px;color:#000;transform:scaleX(0.9797);"><u>G</u>o To</span><span class="t dlg" style="left:667.50px;top:224.50px;font-size:11.3px;color:#000;transform:scaleX(1.0341);">Fi<u>n</u>d what:</span><div class="a" style="left:745px;top:221px;width:457.5px;height:19.5px;background:#fff;border:1px solid #7a7a7a;box-sizing:border-box"></div>
<div class="a" style="left:1185px;top:222px;width:16.5px;height:17.5px;background:#e1e1e1;border:1px solid #adadad;box-sizing:border-box"></div>
<svg style="left:1190px;top:228px" width="8" height="5" viewBox="0 0 8 5"><path d="M0.5 0.5L4 4L7.5 0.5" fill="none" stroke="#444" stroke-width="1.1"/></svg>
<div class="a" style="left:748.5px;top:224px;width:1px;height:13.5px;background:#000"></div>
<div class="btn" style="left:667px;top:341px;width:73.5px;height:22px;"></div>
<span class="t dlg" style="left:685.00px;top:346.25px;font-size:11.3px;color:#000;transform:scaleX(0.8870);">&lt; &lt; <u>L</u>ess</span><div class="btn dis" style="left:828.25px;top:341px;width:121.25px;height:22px;"></div>
<span class="t dlg" style="left:836.25px;top:346.25px;font-size:11.3px;color:#838383;transform:scaleX(1.0468);">Reading Highlight</span><svg style="left:933.5px;top:350.5px" width="5" height="3.0" viewBox="0 0 5 3.0"><path d="M0 0H5 L2.5 3.0 Z" fill="#838383"/></svg>
<div class="btn dis" style="left:961.25px;top:341px;width:72.5px;height:22px;"></div>
<span class="t dlg" style="left:974.25px;top:346.25px;font-size:11.3px;color:#838383;transform:scaleX(1.0291);">Find In</span><svg style="left:1012.5px;top:350.5px" width="5" height="3.0" viewBox="0 0 5 3.0"><path d="M0 0H5 L2.5 3.0 Z" fill="#838383"/></svg>
<div class="btn dis" style="left:1044.25px;top:341px;width:73.75px;height:22px;"></div>
<span class="t dlg" style="left:1056.25px;top:346.25px;font-size:11.3px;color:#838383;transform:scaleX(0.9806);">Find Next</span><div class="btn" style="left:1128px;top:341px;width:73.75px;height:22px;"></div>
<span class="t dlg" style="left:1148.75px;top:346.25px;font-size:11.3px;color:#000;transform:scaleX(0.9522);">Cancel</span><span class="t dlg" style="left:667.50px;top:367.50px;font-size:11.3px;color:#000;transform:scaleX(0.9972);">Search Options</span><div class="a" style="left:751px;top:373.5px;width:452px;height:1px;background:#dcdcdc"></div>
<span class="t dlg" style="left:676.25px;top:391.25px;font-size:11.3px;color:#000;transform:scaleX(0.9344);">Search<u>:</u></span><div class="a" style="left:722.5px;top:387px;width:67px;height:21.5px;background:#fff;border:1px solid #7a7a7a;box-sizing:border-box"></div>
<div class="a" style="left:772.5px;top:388px;width:16px;height:19.5px;background:#e1e1e1;border:1px solid #adadad;box-sizing:border-box"></div>
<svg style="left:776.5px;top:395.5px" width="8" height="5" viewBox="0 0 8 5"><path d="M0.5 0.5L4 4L7.5 0.5" fill="none" stroke="#444" stroke-width="1.1"/></svg>
<span class="t dlg" style="left:726.25px;top:391.25px;font-size:11.3px;color:#000;transform:scaleX(1.0378);">All</span><div class="cb" style="left:676px;top:413.3px"></div>
<span class="t dlg" style="left:693.75px;top:413.75px;font-size:11.3px;color:#000;transform:scaleX(0.9699);">Matc<u>h</u> case</span><div class="cb" style="left:676px;top:432.35px"></div>
<span class="t dlg" style="left:693.75px;top:432.80px;font-size:11.3px;color:#000;transform:scaleX(1.0480);">Find whole words onl<u>y</u></span><div class="cb" style="left:676px;top:451.40000000000003px"></div>
<span class="t dlg" style="left:693.75px;top:451.85px;font-size:11.3px;color:#000;transform:scaleX(0.9906);"><u>U</u>se wildcards</span><div class="cb" style="left:676px;top:470.45000000000005px"></div>
<span class="t dlg" style="left:693.75px;top:470.90px;font-size:11.3px;color:#000;transform:scaleX(0.9990);">Sounds li<u>k</u>e (English)</span><div class="cb" style="left:676px;top:489.5px"></div>
<span class="t dlg" style="left:693.75px;top:489.95px;font-size:11.3px;color:#000;transform:scaleX(1.0166);">Find all <u>w</u>ord forms (English)</span><div class="cb" style="left:1027px;top:413.3px"></div>
<span class="t dlg" style="left:1044.20px;top:413.75px;font-size:11.3px;color:#000;transform:scaleX(1.0311);">Match prefi<u>x</u></span><div class="cb" style="left:1027px;top:432.35px"></div>
<span class="t dlg" style="left:1044.20px;top:432.80px;font-size:11.3px;color:#000;transform:scaleX(1.0395);">Ma<u>t</u>ch suffix</span><div class="cb" style="left:1027px;top:470.45000000000005px"></div>
<span class="t dlg" style="left:1044.36px;top:470.90px;font-size:11.3px;color:#000;transform:scaleX(1.0355);">Ignore punctuation character<u>s</u></span><div class="cb" style="left:1027px;top:489.5px"></div>
<span class="t dlg" style="left:1044.39px;top:489.95px;font-size:11.3px;color:#000;transform:scaleX(1.0094);">Ignore white-sp<u>a</u>ce characters</span><span class="t dlg" style="left:667.50px;top:557.50px;font-size:11.3px;color:#000;transform:scaleX(1.0141);">Find</span><div class="a" style="left:696px;top:563px;width:507px;height:1px;background:#dcdcdc"></div>
<div class="btn" style="left:677px;top:578px;width:73px;height:20.75px;"></div>
<span class="t dlg" style="left:690.00px;top:583.00px;font-size:11.3px;color:#000;transform:scaleX(0.9689);">F<u>o</u>rmat</span><svg style="left:728.5px;top:587.5px" width="5" height="3.0" viewBox="0 0 5 3.0"><path d="M0 0H5 L2.5 3.0 Z" fill="#222"/></svg>
<div class="btn" style="left:760.75px;top:578px;width:73.0px;height:20.75px;"></div>
<span class="t dlg" style="left:774.25px;top:583.00px;font-size:11.3px;color:#000;transform:scaleX(0.9783);">Sp<u>e</u>cial</span><svg style="left:813.0px;top:587.5px" width="5" height="3.0" viewBox="0 0 5 3.0"><path d="M0 0H5 L2.5 3.0 Z" fill="#222"/></svg>
<div class="btn dis" style="left:843.75px;top:577px;width:92.0px;height:21.75px;"></div>
<span class="t dlg" style="left:852.50px;top:582.50px;font-size:11.3px;color:#838383;transform:scaleX(1.0415);">No Formatting</span><div class="a" style="left:0px;top:680px;width:1280px;height:40px;background:#3a230a"></div>
<svg style="left:16px;top:692px" width="16" height="16" viewBox="0 0 16 16"><path d="M0 2.3L6.6 1.4V7.6H0Z M7.5 1.25L16 0V7.6H7.5Z M0 8.5H6.6V14.7L0 13.8Z M7.5 8.5H16V16L7.5 14.8Z" fill="#fff"/></svg>
<div class="a" style="left:48px;top:680.5px;width:344px;height:37.5px;background:#f2f2f2"></div>
<svg style="left:57px;top:689px" width="22" height="22" viewBox="0 0 22 22"><circle cx="11" cy="11" r="9" fill="none" stroke="#1a1a1a" stroke-width="3"/></svg>
<span class="t " style="left:88.00px;top:691.50px;font-size:15px;color:#3c3c3c;transform:scaleX(0.9680);-webkit-text-stroke:.2px #3c3c3c;">Type here to search</span><svg style="left:365.5px;top:690px" width="12" height="20" viewBox="0 0 12 20"><rect x="3.5" y="0.6" width="5" height="11" rx="2.5" fill="none" stroke="#444" stroke-width="1.1"/><path d="M1 8V9.5C1 15 11 15 11 9.5V8 M6 14V17.5 M3 18H9" fill="none" stroke="#444" stroke-width="1.1"/></svg>
<svg style="left:407.7px;top:691.7px" width="16" height="16" viewBox="0 0 16 16"><path d="M0.6 0V2.7H10.9V0 M0.6 4.9H10.9V10.8H0.6Z M0.6 15.4V12.9H10.9V15.4 M14.7 0V2.9 M14.7 8.6V15.4" fill="none" stroke="#fff" stroke-width="1.25"/><rect x="13.3" y="4.3" width="2.8" height="2.8" fill="#fff"/></svg>
<svg style="left:455px;top:688px" width="24" height="24" viewBox="0 0 24 24"><path d="M1 11C2 4 7 0.5 12.5 0.5C19 0.5 23 5.5 23 12V14H8.5C8.5 18 12 20 15.5 20C18 20 20 19.3 22 18V22C19.5 23.2 17 23.8 14.5 23.8C7 23.8 2.5 19 2.5 13C2.5 10 4 7.5 6.5 6C3.5 7 2 8.8 1 11Z M8.6 10H16.5C16.5 7 14.8 5.3 12.5 5.3C10.3 5.3 8.8 7.2 8.6 10Z" fill="#1e7fd6" fill-rule="evenodd"/></svg>
<svg style="left:505px;top:691px" width="22" height="18" viewBox="0 0 25 21"><path d="M0 2H8L10 4H24V20H0Z" fill="#f0c85a"/><rect x="1" y="6" width="22" height="14" fill="#fbe39a"/><path d="M3 13H21V20H3Z" fill="#4ea6dc"/><rect x="8" y="16" width="8" height="4" fill="#fbe39a"/></svg>
<div class="a" style="left:496px;top:717.5px;width:40px;height:1.8px;background:#c0cde0"></div>
<svg style="left:553px;top:688px" width="24" height="24" viewBox="0 0 24 24"><path d="M7.5 6.5V4.5C7.5 -0.5 16.5 -0.5 16.5 4.5V6.5" fill="none" stroke="#fff" stroke-width="1.5"/><rect x="0.5" y="6.5" width="23" height="17" rx="1" fill="#fff"/><rect x="6.5" y="10" width="5" height="5" fill="#e74c2e"/><rect x="12.5" y="10" width="5" height="5" fill="#7cbb3f"/><rect x="6.5" y="16" width="5" height="5" fill="#2ea3e6"/><rect x="12.5" y="16" width="5" height="5" fill="#f5b822"/></svg>
<svg style="left:601px;top:689px" width="26" height="21" viewBox="0 0 26 21"><path d="M0.5 7L13 0.5L25.5 7V20.5H0.5Z" fill="#fff"/><path d="M1.5 7.2H25L19.5 14.5L22 18L17 13Z" fill="#3a230a"/></svg>
<svg style="left:650px;top:688px" width="24" height="24" viewBox="0 0 24 24"><rect x="8" y="1.5" width="14.5" height="21" fill="#fff"/><path d="M14 5H21M14 8H21M14 11H21M14 14H21M14 17H21M14 20H21" stroke="#2b579a" stroke-width="1.2"/><path d="M0.5 3L13 0.8V23.2L0.5 21Z" fill="#2b579a"/></svg>
<span class="t " style="left:652.50px;top:695.00px;font-size:9.5px;color:#fff;font-weight:700;transform:scaleX(1.0000);">W</span><div class="a" style="left:642.3px;top:717.5px;width:41.5px;height:1.8px;background:#c0cde0"></div>
<svg style="left:1021.5px;top:691.5px" width="15" height="15" viewBox="0 0 15 15"><circle cx="10" cy="3.8" r="2.9" fill="none" stroke="#fff" stroke-width="1.3"/><path d="M5.5 9.5C7 6.5 13 6.5 14.5 10.5" fill="none" stroke="#fff" stroke-width="1.3"/><circle cx="4.5" cy="8" r="2.6" fill="none" stroke="#fff" stroke-width="1.3"/><path d="M0.6 14.6C1 10.5 8 10.5 8.4 14.6" fill="none" stroke="#fff" stroke-width="1.3"/></svg>
<svg style="left:1058.5px;top:696px" width="13" height="8" viewBox="0 0 13 8"><path d="M0.7 7L6.5 1.2L12.3 7" fill="none" stroke="#fff" stroke-width="1.5"/></svg>
<svg style="left:1081.5px;top:693.5px" width="16" height="14" viewBox="0 0 16 14"><rect x="3.5" y="0.6" width="12" height="8" fill="none" stroke="#fff" stroke-width="1.2"/><rect x="0.6" y="0.6" width="4" height="4.5" fill="#3a230a" stroke="#fff" stroke-width="1.1"/><path d="M2.6 5.2V12.6H12 M8.5 8.8V12.6" fill="none" stroke="#fff" stroke-width="1.2"/></svg>
<svg style="left:1105px;top:693px" width="15" height="14" viewBox="0 0 15 14"><path d="M0.6 4.5H3.5L7 1V13L3.5 9.5H0.6Z" fill="none" stroke="#fff" stroke-width="1.1"/><path d="M9 4.5C10.2 6 10.2 8 9 9.5 M11 2.8C13 5.5 13 8.5 11 11.2" fill="none" stroke="#fff" stroke-width="1.1"/><path d="M13 1C15.8 5 15.8 9 13 13" fill="none" stroke="#9d9186" stroke-width="1.1"/></svg>
<svg style="left:1129px;top:693.5px" width="24" height="13" viewBox="0 0 24 13"><rect x="0.7" y="0.7" width="22.6" height="11.6" rx="1.5" fill="none" stroke="#fff" stroke-width="1.3"/><path d="M3.5 4H20.5 M3.5 6.5H20.5" stroke="#fff" stroke-width="1.2" stroke-dasharray="1.5 1.2"/><path d="M6 9.3H18" stroke="#fff" stroke-width="1.2"/></svg>
<span class="t " style="left:1179.00px;top:683.70px;font-size:12px;color:#fff;transform:scaleX(0.8400);-webkit-text-stroke:.25px #fff;">13:13</span><span class="t " style="left:1163.00px;top:701.70px;font-size:12px;color:#fff;transform:scaleX(0.9522);-webkit-text-stroke:.25px #fff;">30/01/2019</span><svg style="left:1238.5px;top:691.7px" width="17" height="15" viewBox="0 0 17 15"><path d="M0 0H16.7V12H7L3.6 15V12H0Z" fill="#fff"/></svg>
<div class="a" style="left:1242px;top:695px;width:10px;height:1px;background:#2a1805"></div>
<div class="a" style="left:1242px;top:698px;width:10px;height:1px;background:#2a1805"></div>
<div class="a" style="left:1242px;top:701px;width:6px;height:1px;background:#2a1805"></div>
<svg style="left:1246.3px;top:698.6px" width="17" height="17" viewBox="0 0 17 17"><circle cx="8.5" cy="8.5" r="7.5" fill="#3a230a" stroke="#b5aca2" stroke-width="1.2"/></svg>
<span class="t " style="left:1252.30px;top:699.80px;font-size:12px;color:#fff;transform:scaleX(0.5714);-webkit-text-stroke:.5px #fff;">1</span><div class="a" style="left:1275px;top:680px;width:1px;height:40px;background:#6b5a47"></div>
<svg style="left:20px;top:20px" width="180" height="180" viewBox="0 0 180 180"><circle cx="89.5" cy="89.3" r="85.3" fill="rgba(50,50,50,.72)"/><path d="M89.5 46.2A43.2 43.2 0 1 1 89.49 46.2Z M81.1 72.8V105.8L105.4 89.2Z" fill="#fff" fill-rule="evenodd"/></svg>
<svg style="left:888.7px;top:280.6px" width="13" height="20" viewBox="0 0 13 20"><path d="M0.6 0.6V16.8L4.6 13.2L7.2 18.8L10 17.6L7.6 12.3L11.9 11.6Z" fill="#fff" stroke="#111" stroke-width="1.1" stroke-linejoin="round"/></svg>
<div class="a" style="left:1279px;top:0px;width:1px;height:720px;background:#3d0800"></div>
<div class="a" style="left:0px;top:719px;width:1280px;height:1px;background:#140a02"></div>

</div></body></html>
